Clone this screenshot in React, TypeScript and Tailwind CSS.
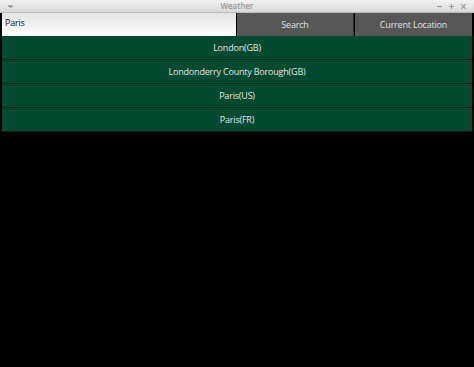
export default function App() {
  const results = ["London(GB)", "Londonderry County Borough(GB)", "Paris(US)", "Paris(FR)"];

  return (
    <div className="w-[474px] h-[367px] bg-black flex flex-col overflow-hidden" style={{ fontFamily: '"Open Sans", "Noto Sans", sans-serif' }}>
      {/* Title bar */}
      <div className="h-[13px] flex items-center px-[6px] bg-gradient-to-b from-[#f2f2f2] to-[#d9d9d9] border-b border-[#bcbcbc] relative">
        <svg width="7" height="5" viewBox="0 0 7 5" className="ml-[1px]">
          <path d="M1 1.5 L3.5 3.5 L6 1.5" fill="#888" stroke="#888" strokeWidth="0.8" />
        </svg>
        <span className="absolute left-1/2 -translate-x-1/2 text-[8px] leading-none text-[#9a9a9a] font-semibold">Weather</span>
        <div className="ml-auto flex items-center gap-[5px] mr-[1px]">
          <svg width="7" height="7" viewBox="0 0 7 7"><path d="M1 3.5 H6" stroke="#999" strokeWidth="1.1" /></svg>
          <svg width="7" height="7" viewBox="0 0 7 7"><path d="M1 3.5 H6 M3.5 1 V6" stroke="#999" strokeWidth="1.1" /></svg>
          <svg width="7" height="7" viewBox="0 0 7 7"><path d="M1.2 1.2 L5.8 5.8 M5.8 1.2 L1.2 5.8" stroke="#999" strokeWidth="1.1" /></svg>
        </div>
      </div>

      <div className="flex flex-col px-[2px] tracking-[-0.2px]">
        {/* Search row */}
        <div className="flex h-[23px] gap-[1px]">
          <div className="w-[234px] bg-gradient-to-b from-[#e4e4e4] to-[#ffffff] px-[3px] pt-[3px] text-[9px] text-[#111] font-medium leading-[14px]">
            Paris
          </div>
          <button className="w-[117px] bg-[#575757] border-r border-[#2e2e2e] text-[9px] text-[#e0e0e0] font-medium">
            Search
          </button>
          <button className="flex-1 bg-[#575757] text-[9px] text-[#e0e0e0] font-medium">
            Current Location
          </button>
        </div>

        {/* Results */}
        <div className="flex flex-col">
          {results.map((r) => (
            <div key={r} className="h-[24px] bg-[#024a30] border-b border-[#0c2219] flex items-center justify-center text-[9px] text-[#e6e6e6] font-medium">
              {r}
            </div>
          ))}
        </div>
      </div>
    </div>
  );
}
